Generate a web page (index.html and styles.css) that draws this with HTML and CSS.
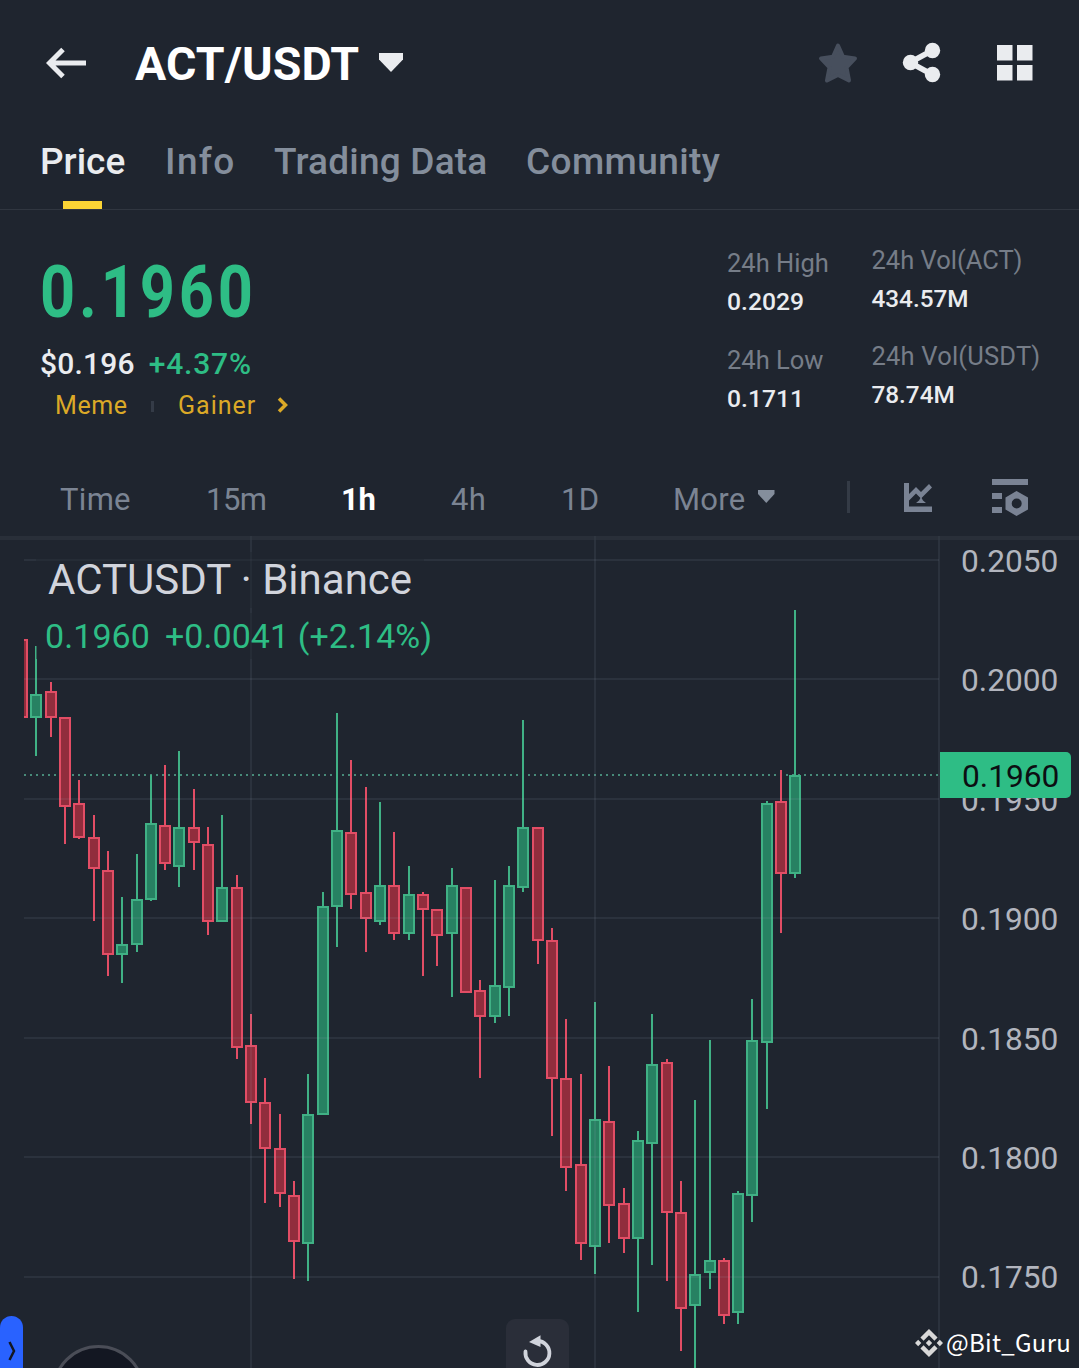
FILE: index.html
```html
<!DOCTYPE html>
<html lang="en">
<head>
<meta charset="utf-8">
<title>ACT/USDT</title>
<link rel="stylesheet" href="styles.css">
</head>
<body>
<div class="app">
  <header class="header">
    <svg class="back" width="40" height="32" viewBox="0 0 40 32"><path d="M17 2.500 3.500 16 17 29.500M4 16H40" fill="none" stroke="#eaecef" stroke-width="5"/></svg>
    <h1 class="pair">ACT/USDT</h1>
    <svg class="pair-caret" width="24" height="19" viewBox="0 0 24 19"><path d="M0 0H24V6.500L12 19 0 6.500Z" fill="#eaecef"/></svg>
    <svg class="star" width="40" height="42" viewBox="0 0 40 42"><path d="M20 3.500 25 14.800 37 16.500 28.500 25.500 31 38.500 20 33 9 38.500 11.500 25.500 3 16.500 15 14.800Z" fill="#474f5d" stroke="#474f5d" stroke-width="4" stroke-linejoin="round"/></svg>
    <svg class="share" width="39" height="41" viewBox="0 0 39 41"><path d="M31 8 8 20.500 31 33" fill="none" stroke="#eaecef" stroke-width="5.500"/><circle cx="30.500" cy="8.500" r="7.700" fill="#eaecef"/><circle cx="8.500" cy="20.500" r="7.700" fill="#eaecef"/><circle cx="30.500" cy="32.500" r="7.700" fill="#eaecef"/></svg>
    <svg class="apps" width="37" height="37" viewBox="0 0 37 37"><path d="M1 1H16.500V16.500H1ZM21 1H36.500V16.500H21ZM1 21H16.500V36.500H1ZM21 21H36.500V36.500H21Z" fill="#eaecef"/></svg>
  </header>

  <nav class="tabs">
    <span class="tab tab-active">Price</span>
    <span class="tab tab-info">Info</span>
    <span class="tab tab-trading">Trading Data</span>
    <span class="tab">Community</span>
  </nav>

  <section class="summary">
    <div class="quote">
      <div class="last">0.1960</div>
      <div class="fiat"><span>$0.196</span><span class="change">+4.37%</span></div>
      <div class="tags">
        <span class="meme">Meme</span><i class="tag-sep"></i><span class="gainer">Gainer</span>
        <svg class="tag-arrow" width="12" height="16" viewBox="0 0 12 16"><path d="M2 1.500 8.500 8 2 14.500" fill="none" stroke="#dba927" stroke-width="3.500"/></svg>
      </div>
    </div>
    <dl class="stats range">
      <dt>24h High</dt><dd>0.2029</dd>
      <dt>24h Low</dt><dd>0.1711</dd>
    </dl>
    <dl class="stats volume">
      <dt>24h Vol(ACT)</dt><dd>434.57M</dd>
      <dt class="vol-usdt">24h Vol(USDT)</dt><dd>78.74M</dd>
    </dl>
  </section>

  <div class="toolbar">
    <span>Time</span><span class="interval-15m">15m</span><span class="interval-active">1h</span><span>4h</span><span>1D</span>
    <span class="more">More<svg width="17" height="13" viewBox="0 0 17 13"><path d="M0 0H16.500V4L8.250 13 0 4Z" fill="#848e9c"/></svg></span>
    <i class="divider"></i>
    <svg class="indicator" width="28" height="29" viewBox="0 0 28 29"><path d="M0 0H5V11L12 4 17 9 25 1 28 4.500 17 15.500 12 10.500 5 17.500V23.500H28V29H0Z" fill="#7a8394"/><path d="M12 20H22L19 17.500 17 14 15 17.500Z" fill="#7a8394"/></svg>
    <svg class="settings" width="36" height="37" viewBox="0 0 36 37"><path d="M0 0H36V6H0ZM0 14H10V20H0ZM0 28H10V34H0Z" fill="#7a8394"/><path fill-rule="evenodd" d="M24.500 12 36 18.500V30.500L24.500 37 13.500 30.500V18.500ZM24.700 19.500A5 5 0 1 0 24.700 29.500 5 5 0 1 0 24.700 19.500Z" fill="#7a8394"/></svg>
  </div>

  <main class="chart">
    <svg class="plot" id="plot" width="940" height="832" viewBox="0 536 940 832" shape-rendering="crispEdges"></svg>
    <div class="axis">
      <span>0.2050</span><span>0.2000</span><span>0.1950</span><span>0.1900</span><span>0.1850</span><span>0.1800</span><span>0.1750</span>
    </div>
    <div class="rule"></div>
    <div class="legend">
      <div class="legend-title">ACTUSDT · Binance</div>
      <div class="legend-values"><span>0.1960</span><span>+0.0041 (+2.14%)</span></div>
    </div>
    <div class="price-badge">0.1960</div>
    <div class="drawer"><svg width="8" height="20" viewBox="0 0 8 20"><path d="M1.500 1 6 10 1.500 19" fill="none" stroke="#131722" stroke-width="2.500"/></svg></div>
    <div class="knob"></div>
    <div class="reset"><svg width="30" height="34" viewBox="0 0 30 34"><path d="M3.500 16.500A12 12 0 1 0 15.500 6" fill="none" stroke="#d1d4dc" stroke-width="3.800" stroke-linecap="round"/><path d="M7 7 18.500 .3V12Z" fill="#d1d4dc"/></svg></div>
    <div class="watermark">
      <svg width="28" height="28" viewBox="0 0 24 24"><path fill="#d9d9d9" d="M16.624 13.920l2.717 2.716-7.353 7.353-7.353-7.352 2.718-2.717 4.635 4.660zM21.260 9.284L24 12l-2.715 2.716L18.568 12zM11.989 9.285l2.716 2.691-2.716 2.717L9.272 12zM2.716 9.284L5.409 12l-2.692 2.692L0 12zM11.989.011l7.353 7.329-2.718 2.716-4.635-4.636-4.636 4.660-2.717-2.716z"/></svg>
      <span>@Bit_Guru</span>
    </div>
  </main>
</div>
<script src="chart.js"></script>
</body>
</html>
```
FILE: styles.css
```css
* { box-sizing: border-box; }
html, body { margin: 0; background: #1f252f; }
body { font-family: Roboto, "Liberation Sans", sans-serif; color: #eaecef; overflow: hidden; }
.app { width: 1079px; height: 1368px; overflow: hidden; display: flex; flex-direction: column; }
svg { display: block; flex: none; }

.header { height: 128px; display: flex; align-items: center; padding: 0 46px; }
.back { margin-top: -3px; }
.pair { margin: 0 0 0 49px; width: 244px; font-size: 46.500px; font-weight: 700; color: #fff; letter-spacing: 0.100px; }
.pair-caret { margin-top: -4px; }
.star { margin: -3px 0 0 auto; }
.share { margin: -3px 0 0 44px; }
.apps { margin: -3px 0 0 55px; }

.tabs { height: 82px; padding-left: 39px; border-bottom: 1px solid #303640; display: grid; grid-template-columns: 126px 109px 252px auto; }
.tab { font-size: 37px; font-weight: 500; line-height: 67px; color: #848e9c; letter-spacing: 0.400px; white-space: nowrap; }
.tab-info { letter-spacing: 1.400px; }
.tab-trading { letter-spacing: 0.200px; }
.tab-active { color: #eaecef; letter-spacing: 0; text-indent: 1px; }
.tab-active::after { content: ""; display: block; width: 39px; height: 8px; margin: 6px 0 0 24px; background: #fcd535; }

.summary { height: 248px; display: flex; padding-left: 40px; }
.quote { width: 687px; padding-top: 42px; }
.last { font-size: 73px; font-weight: 700; line-height: 80px; letter-spacing: 4.600px; color: #2ebd85; transform: scaleX(.84); transform-origin: 0 50%; }
.fiat { margin-top: 10px; display: flex; gap: 14px; font-size: 30px; font-weight: 500; line-height: 43px; letter-spacing: 0.200px; }
.change { color: #2ebd85; letter-spacing: 0.800px; }
.tags { display: flex; align-items: center; padding-left: 15px; font-size: 25px; line-height: 42px; color: #dba927; letter-spacing: 0.600px; }
.meme { width: 96px; }
.tag-sep { width: 3px; height: 11px; background: #343b47; }
.gainer { margin-left: 24px; width: 99px; letter-spacing: 1px; }
.tag-arrow { margin-top: -3px; }
.stats { margin: 0; font-size: 25.500px; line-height: 38px; white-space: nowrap; }
.stats dt { color: #767d88; }
.stats dd { margin: 0 0 20px; padding-top: 1px; font-size: 24.700px; font-weight: 500; color: #eaecef; }
.range { width: 144.500px; padding-top: 34px; }
.volume { padding-top: 31.500px; line-height: 37.500px; }
.volume dd { font-size: 24.300px; }
.vol-usdt { letter-spacing: 0.200px; }

.toolbar { height: 78px; padding: 5px 0 0 60px; display: grid; grid-template-columns: 146px 135px 110px 110px 112px 174px 57px 88px auto; align-items: center; font-size: 31px; color: #7b8493; letter-spacing: 0.300px; }
.interval-15m { letter-spacing: -0.500px; }
.interval-active { color: #fff; font-weight: 700; letter-spacing: -0.300px; }
.more { display: flex; align-items: center; gap: 12px; }
.more svg { margin-top: -6px; }
.divider { width: 3px; height: 32px; margin-top: -5px; background: #343b46; }
.indicator, .settings { margin-top: -5px; }

.chart { position: relative; height: 832px; display: flex; }
.axis { padding: 6px 0 0 21px; display: flex; flex-direction: column; gap: 79.400px; font-size: 31.700px; line-height: 40px; color: #b2b5be; }
.rule { position: absolute; inset: 0 0 auto; height: 4px; background: rgba(52, 57, 67, .5); }
.legend { position: absolute; left: 36px; top: 16px; }
.legend-title { width: 388px; padding-left: 12px; line-height: 56px; font-size: 42px; color: #d1d4dc; background: rgba(31, 37, 47, .5); white-space: nowrap; }
.legend-values { margin-top: 5px; width: 400px; padding-left: 9px; display: flex; gap: 15px; font-size: 34px; line-height: 46px; letter-spacing: 0.070px; color: #2ebd85; background: rgba(31, 37, 47, .5); white-space: nowrap; }
.price-badge { position: absolute; left: 940px; top: 216px; width: 131px; height: 46px; padding: 2px 0 0 22px; border-radius: 0 5px 5px 0; background: #2ebd85; color: #0c0e12; font-size: 31.700px; line-height: 46px; }
.drawer { position: absolute; left: 0; top: 780px; width: 23px; height: 70px; border-radius: 12px; background: #2962ff; padding: 25px 0 0 8px; }
.knob { position: absolute; left: 52px; top: 809px; width: 93px; height: 93px; border: 3px solid #4a4d57; border-radius: 50%; background: #131722; }
.reset { position: absolute; left: 506px; top: 783px; width: 63px; height: 70px; border-radius: 9px; background: #2a2e39; padding: 16px 0 0 16px; }
.watermark { position: absolute; left: 915px; top: 788px; display: flex; align-items: center; gap: 3px; font: 24px/40px "Noto Sans CJK SC", sans-serif; letter-spacing: 0.300px; color: #fff; }
.watermark span { margin-top: -2px; }

.grid { fill: #a0aabe; opacity: .1; }
.up-line { fill: #40b185; }
.up-body { fill: #278162; }
.down-line { fill: #e24d65; }
.down-body { fill: #912d3d; }
.last-line { stroke: #488b7a; stroke-width: 2; stroke-dasharray: 2 4; }
```
FILE: chart.js
```js
// Each candle: direction, centre x, body top, body bottom, wick top, wick bottom
const candles = [
  ["d",22,639,718,639,718],["u",36,694,718,646,756],["d",51,691,718,682,737],["d",65,717,807,717,844],
  ["d",79,803,838,780,839],["d",94,837,869,815,921],["d",108,870,955,851,976],["u",122,944,955,897,983],
  ["u",137,899,945,854,952],["u",151,823,900,775,901],["d",165,825,864,765,870],["u",179,827,867,751,887],
  ["d",194,827,843,789,870],["d",208,844,922,827,935],["u",222,887,922,815,922],["d",237,887,1048,875,1059],
  ["d",251,1045,1103,1014,1124],["d",265,1102,1149,1078,1203],["d",280,1148,1194,1114,1207],["d",294,1195,1242,1181,1279],
  ["u",308,1114,1244,1074,1281],["u",323,906,1115,892,1115],["u",337,830,907,713,947],["d",351,832,895,760,909],
  ["d",366,892,919,787,952],["u",380,885,922,802,925],["d",394,885,934,832,940],["u",409,894,934,866,940],
  ["d",423,894,910,892,976],["d",437,909,936,909,966],["u",452,885,934,868,997],["d",466,887,993,887,993],
  ["d",480,990,1017,980,1078],["u",495,985,1017,880,1023],["u",509,885,988,866,1016],["u",523,827,888,720,892],
  ["d",538,827,941,827,964],["d",552,940,1079,928,1136],["d",566,1078,1168,1019,1191],["d",581,1164,1244,1074,1260],
  ["u",595,1119,1247,1002,1274],["d",609,1121,1206,1066,1243],["d",624,1203,1239,1188,1253],["u",638,1140,1239,1131,1312],
  ["u",652,1064,1144,1014,1265],["d",667,1062,1213,1059,1281],["d",681,1212,1309,1181,1351],["u",695,1274,1306,1100,1368],
  ["u",710,1260,1273,1040,1289],["d",724,1260,1316,1258,1324],["u",738,1193,1313,1191,1324],["u",752,1040,1196,999,1222],
  ["u",767,803,1043,801,1109],["d",781,801,874,770,933],["u",795,775,874,610,878]
];
const rect = (cls, x, y, w, h) => `<rect class="${cls}" x="${x}" y="${y}" width="${w}" height="${h}"/>`;
let marks = '<clipPath id="pane"><rect x="24" y="536" width="915" height="832"/></clipPath><g clip-path="url(#pane)">';
marks += '<path class="last-line" d="M24 775H939"/>';
for (const [dir, x, top, bottom, high, low] of candles) {
  const side = dir === "u" ? "up" : "down";
  marks += rect(side + "-line", x - 1, high, 2, low - high);
  marks += rect(side + "-line", x - 6, top, 12, bottom - top);
  marks += rect(side + "-body", x - 4, top + 2, 8, bottom - top - 4);
}
marks += "</g>";
for (const y of [559, 678, 798, 917, 1037, 1156, 1276]) marks += rect("grid", 24, y, 915, 2);
for (const x of [250, 594, 938]) marks += rect("grid", x, 536, 2, 832);
document.getElementById("plot").innerHTML = marks;
```
